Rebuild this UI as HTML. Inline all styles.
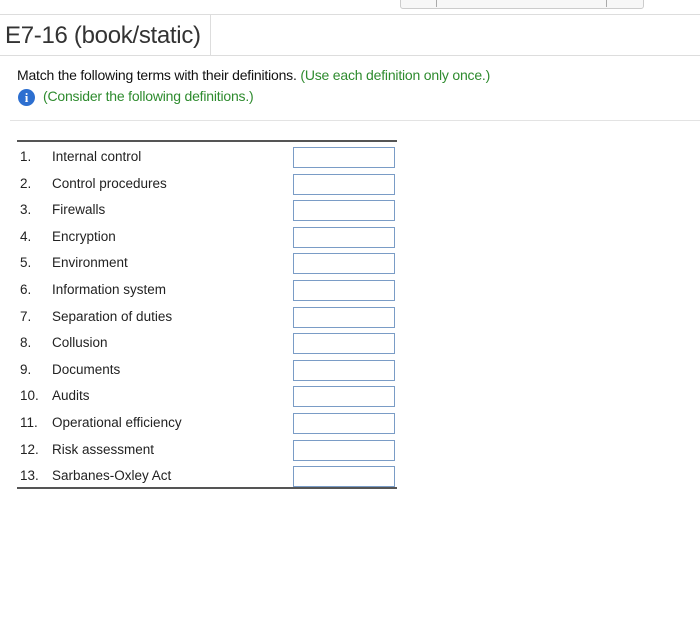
<!DOCTYPE html>
<html><head><meta charset="utf-8"><style>
body{margin:0;width:700px;height:644px;background:#fff;font-family:"Liberation Sans",Arial,sans-serif;position:relative;overflow:hidden;color:#222}
.abs{position:absolute}
.row{position:absolute;left:17px;width:380px;height:26px;font-size:13.5px;line-height:26px}
.row .n{position:absolute;left:3px}
.row .t{position:absolute;left:35px}
.row .b{position:absolute;left:276px;top:3px;width:100px;height:19px;border:1px solid #7a9cc6;background:#fff}
</style></head><body>
<div class="abs" style="left:400px;top:-4px;width:242px;height:11px;border:1px solid #ccc;border-radius:3px;background:#f7f7f7"></div>
<div class="abs" style="left:436px;top:0;width:1px;height:7px;background:#aaa"></div>
<div class="abs" style="left:606px;top:0;width:1px;height:7px;background:#aaa"></div>
<div class="abs" style="left:0;top:14px;width:700px;height:1px;background:#ddd"></div>
<div class="abs" style="left:0;top:55px;width:700px;height:1px;background:#ddd"></div>
<div class="abs" style="left:210px;top:15px;width:1px;height:40px;background:#ddd"></div>
<div class="abs" style="left:5px;top:22px;font-size:24px;color:#333;letter-spacing:-0.3px">E7-16 (book/static)</div>
<div class="abs" style="left:17px;top:67px;font-size:14px;color:#111;letter-spacing:-0.2px">Match the following terms with their definitions. <span style="color:#2e8b2e">(Use each definition only once.)</span></div>
<div class="abs" style="left:18px;top:89px;width:17px;height:17px;border-radius:50%;background:#2d6fd0;color:#fff;font:bold 13px/17px 'Liberation Serif',serif;text-align:center">i</div>
<div class="abs" style="left:43px;top:88px;font-size:14px;color:#2e8b2e;letter-spacing:-0.2px">(Consider the following definitions.)</div>
<div class="abs" style="left:10px;top:120px;width:690px;height:1px;background:#e3e3e3"></div>
<div class="abs" style="left:17px;top:140px;width:380px;height:2px;background:#555"></div>
<div class="abs" style="left:17px;top:487px;width:380px;height:2px;background:#555"></div>
<div class="row" style="top:144px"><span class="n">1.</span><span class="t">Internal control</span><span class="b"></span></div>
<div class="row" style="top:170.6px"><span class="n">2.</span><span class="t">Control procedures</span><span class="b"></span></div>
<div class="row" style="top:197.2px"><span class="n">3.</span><span class="t">Firewalls</span><span class="b"></span></div>
<div class="row" style="top:223.8px"><span class="n">4.</span><span class="t">Encryption</span><span class="b"></span></div>
<div class="row" style="top:250.4px"><span class="n">5.</span><span class="t">Environment</span><span class="b"></span></div>
<div class="row" style="top:277px"><span class="n">6.</span><span class="t">Information system</span><span class="b"></span></div>
<div class="row" style="top:303.6px"><span class="n">7.</span><span class="t">Separation of duties</span><span class="b"></span></div>
<div class="row" style="top:330.2px"><span class="n">8.</span><span class="t">Collusion</span><span class="b"></span></div>
<div class="row" style="top:356.8px"><span class="n">9.</span><span class="t">Documents</span><span class="b"></span></div>
<div class="row" style="top:383.4px"><span class="n">10.</span><span class="t">Audits</span><span class="b"></span></div>
<div class="row" style="top:410px"><span class="n">11.</span><span class="t">Operational efficiency</span><span class="b"></span></div>
<div class="row" style="top:436.6px"><span class="n">12.</span><span class="t">Risk assessment</span><span class="b"></span></div>
<div class="row" style="top:463.2px"><span class="n">13.</span><span class="t">Sarbanes-Oxley Act</span><span class="b"></span></div>
</body></html>
